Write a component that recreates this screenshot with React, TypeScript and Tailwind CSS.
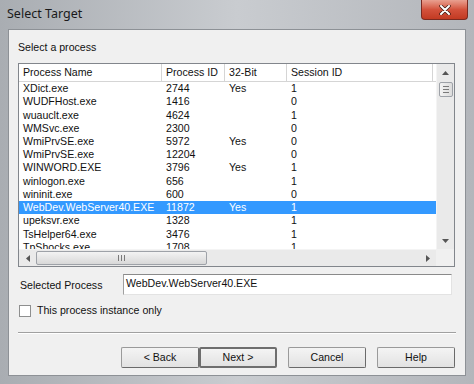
import React from "react"

const rows = [
  ["XDict.exe", "2744", "Yes", "1"],
  ["WUDFHost.exe", "1416", "", "0"],
  ["wuauclt.exe", "4624", "", "1"],
  ["WMSvc.exe", "2300", "", "0"],
  ["WmiPrvSE.exe", "5972", "Yes", "0"],
  ["WmiPrvSE.exe", "12204", "", "0"],
  ["WINWORD.EXE", "3796", "Yes", "1"],
  ["winlogon.exe", "656", "", "1"],
  ["wininit.exe", "600", "", "0"],
  ["WebDev.WebServer40.EXE", "11872", "Yes", "1"],
  ["upeksvr.exe", "1328", "", "1"],
  ["TsHelper64.exe", "3476", "", "1"],
  ["TpShocks.exe", "1708", "", "1"],
]

const cols = ["w-[143px]", "w-[63px]", "w-[62px]", "w-[146px]"]

const Btn = ({ label, def }: { label: string; def?: boolean }) => (
  <div
    className={
      "h-[21px] flex items-center justify-center rounded-[2px] bg-gradient-to-b from-[#f4f4f4] to-[#e2e2e2] " +
      (def ? "border-2 border-[#6e6e6e] w-[78px]" : "border border-[#9a9a9a] border-b-[#6a6a6a] border-r-[#6a6a6a] w-[78px]")
    }
  >
    {label}
  </div>
)

export default function App() {
  return (
    <div className="w-[474px] h-[384px] overflow-hidden bg-gradient-to-r from-[#a9adb2] via-[#c9ccd0] to-[#b3b6bb] flex flex-col text-[10.6px] text-[#111]" style={{ fontFamily: '"Liberation Sans", Arial, sans-serif' }}>
      {/* title bar */}
      <div className="relative h-[29px] shrink-0">
        <div className="absolute left-[7px] top-[5px] text-[12.5px] text-[#1a1a1a]" style={{ fontFamily: '"Noto Sans", sans-serif' }}>
          Select Target
        </div>
        <div className="absolute right-[6px] top-0 w-[47px] h-[20px] rounded-b-[4px] border border-[#7a2a20] border-t-0 bg-gradient-to-b from-[#e8a090] via-[#d3523c] to-[#c23a22] flex items-center justify-center">
          <svg width="12" height="10" viewBox="0 0 12 10">
            <path d="M2 1 L10 9 M10 1 L2 9" stroke="#3a1a14" strokeWidth="3.4" strokeLinecap="round" />
            <path d="M2 1 L10 9 M10 1 L2 9" stroke="#ffffff" strokeWidth="2" strokeLinecap="round" />
          </svg>
        </div>
      </div>

      {/* client area */}
      <div className="mx-[8px] h-[347px] shrink-0 bg-[#f0f0f0] border border-[#8d9196] pl-[9px] pr-[10px] flex flex-col">
        <div className="h-[13px] mt-[11px] leading-[13px]">Select a process</div>

        {/* list view */}
        <div className="mt-[9px] h-[204px] w-[437px] border border-[#82868c] bg-white flex flex-col">
          <div className="flex h-[185px]">
            <div className="w-[417px] flex flex-col overflow-hidden">
              <div className="flex h-[18px] shrink-0 border-b border-[#d5d5d5]">
                {["Process Name", "Process ID", "32-Bit", "Session ID"].map((h, i) => (
                  <div key={h} className={cols[i] + " shrink-0 h-full border-r border-[#d5d5d5] pl-[4px] flex items-center"}>
                    {h}
                  </div>
                ))}
              </div>
              {rows.map((r, ri) => (
                <div key={ri} className={"flex h-[13.22px] shrink-0 items-center " + (ri === 9 ? "bg-[#3399ff] text-white" : "")}>
                  {r.map((c, ci) => (
                    <div key={ci} className={cols[ci] + " shrink-0 pl-[4px] leading-[13px] whitespace-nowrap"}>
                      {c}
                    </div>
                  ))}
                </div>
              ))}
            </div>
            {/* vertical scrollbar */}
            <div className="w-[18px] h-full bg-[#eaeaea] border-l border-[#f4f4f4] flex flex-col items-center">
              <div className="h-[17px] flex items-center justify-center">
                <svg width="7" height="4" viewBox="0 0 7 4"><path d="M0 4 L3.5 0 L7 4 Z" fill="#555" /></svg>
              </div>
              <div className="w-[14px] h-[15px] mt-[1px] rounded-[2px] border border-[#9ea2a8] bg-gradient-to-r from-[#f3f3f3] to-[#dcdcdc] flex flex-col items-center justify-center gap-[2px]">
                <div className="w-[6px] h-px bg-[#7a7a7a]" />
                <div className="w-[6px] h-px bg-[#7a7a7a]" />
                <div className="w-[6px] h-px bg-[#7a7a7a]" />
              </div>
              <div className="flex-1" />
              <div className="h-[17px] flex items-center justify-center">
                <svg width="7" height="4" viewBox="0 0 7 4"><path d="M0 0 L3.5 4 L7 0 Z" fill="#555" /></svg>
              </div>
            </div>
          </div>
          {/* horizontal scrollbar */}
          <div className="flex h-[17px]">
            <div className="w-[417px] h-full bg-[#eaeaea] border-t border-[#f4f4f4] flex items-center">
              <div className="w-[17px] flex items-center justify-center">
                <svg width="4" height="7" viewBox="0 0 4 7"><path d="M4 0 L0 3.5 L4 7 Z" fill="#555" /></svg>
              </div>
              <div className="w-[171px] h-[14px] rounded-[2px] border border-[#9ea2a8] bg-gradient-to-b from-[#f3f3f3] to-[#d8d8d8] flex items-center justify-center gap-[2px]">
                <div className="w-px h-[6px] bg-[#7a7a7a]" />
                <div className="w-px h-[6px] bg-[#7a7a7a]" />
                <div className="w-px h-[6px] bg-[#7a7a7a]" />
              </div>
              <div className="flex-1" />
              <div className="w-[17px] flex items-center justify-center">
                <svg width="4" height="7" viewBox="0 0 4 7"><path d="M0 0 L4 3.5 L0 7 Z" fill="#555" /></svg>
              </div>
            </div>
            <div className="w-[18px] h-full bg-[#f0f0f0]" />
          </div>
        </div>

        {/* selected process */}
        <div className="flex items-center mt-[7px] h-[21px]">
          <div className="w-[105px] pl-[2px] pt-[3px]">Selected Process</div>
          <div className="w-[329px] h-[21px] bg-white border border-[#e3e3e3] border-t-[#8a8a8a] border-l-[#a0a0a0] pl-[2px] leading-[16px]">
            WebDev.WebServer40.EXE
          </div>
        </div>

        {/* checkbox */}
        <div className="flex items-center mt-[9px] h-[13px]">
          <div className="w-[12px] h-[12px] ml-[1px] bg-white border border-[#8e8f8f]" />
          <div className="ml-[6px]">This process instance only</div>
        </div>

        {/* separator */}
        <div className="mt-[15px] w-[438px] h-[2px] border-t border-[#a0a0a0] border-b border-b-white" />

        {/* buttons */}
        <div className="flex mt-[13px] pl-[103px]">
          <Btn label="< Back" />
          <div className="ml-[0px]"><Btn label="Next >" def /></div>
          <div className="ml-[11px]"><Btn label="Cancel" /></div>
          <div className="ml-[11px]"><Btn label="Help" /></div>
        </div>
      </div>
    </div>
  )
}
